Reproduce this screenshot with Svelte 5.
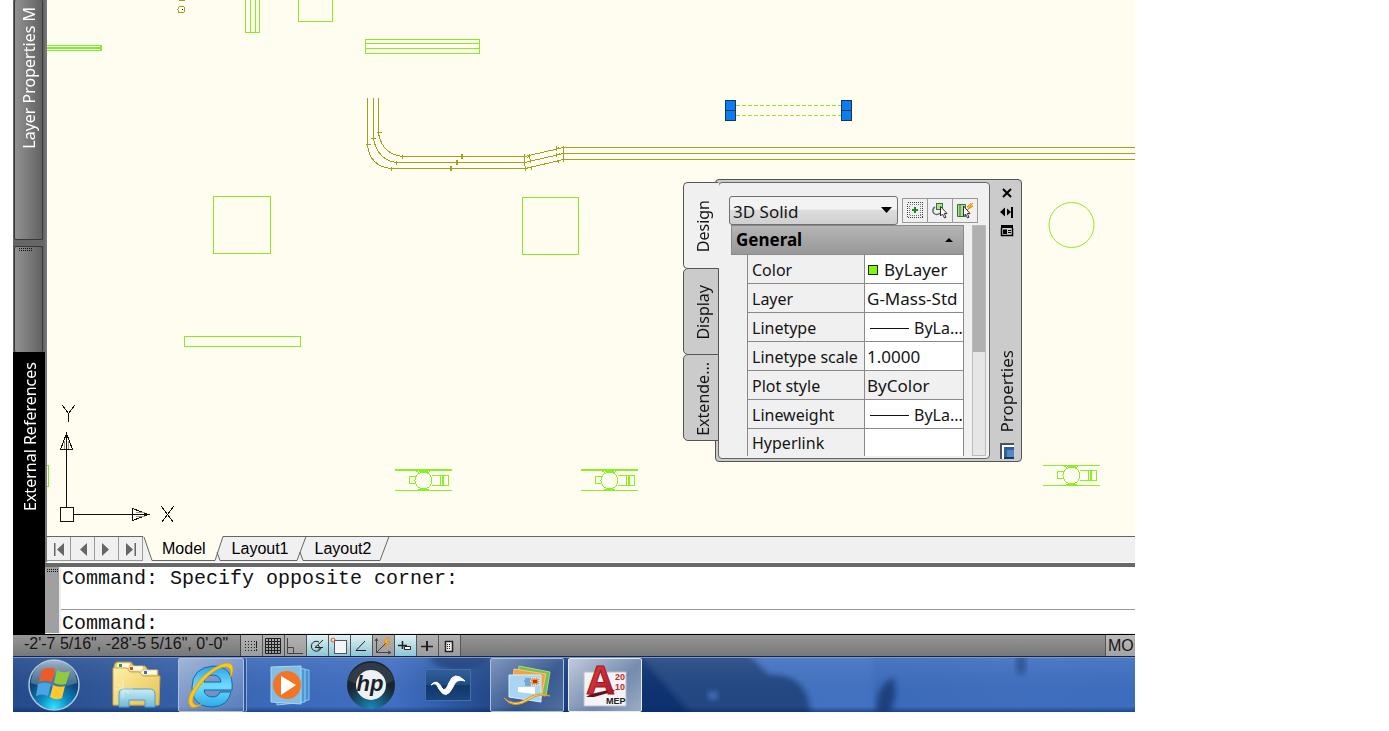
<script>
  const rows = [
    { name: 'Color', value: 'ByLayer', kind: 'color' },
    { name: 'Layer', value: 'G-Mass-Std', kind: 'text' },
    { name: 'Linetype', value: 'ByLa...', kind: 'line' },
    { name: 'Linetype scale', value: '1.0000', kind: 'input' },
    { name: 'Plot style', value: 'ByColor', kind: 'locked' },
    { name: 'Lineweight', value: 'ByLa...', kind: 'line' },
    { name: 'Hyperlink', value: '', kind: 'input' }
  ];
  const paletteTabs = ['Design', 'Display', 'Extende...'];
  let activeTab = $state('Design');
  let sheet = $state('Model');
  const toggles = [
    { id: 'snap', label: 'Snap', on: false },
    { id: 'grid', label: 'Grid', on: false },
    { id: 'ortho', label: 'Ortho', on: false },
    { id: 'polar', label: 'Polar', on: true },
    { id: 'osnap', label: 'Object snap', on: true },
    { id: 'otrack', label: 'Tracking', on: true },
    { id: 'ducs', label: 'Dynamic UCS', on: false },
    { id: 'dyn', label: 'Dynamic input', on: true },
    { id: 'lwt', label: 'Lineweight display', on: false },
    { id: 'qp', label: 'Quick properties', on: false }
  ];
  const fixtures = [
    { x: 394, y: 470, thick: true },
    { x: 580, y: 470, thick: true },
    { x: 1042, y: 465, thick: false }
  ];
</script>

<div class="page">
  <div class="workspace">
    <aside class="rail">
      <button class="dock first"><span>Layer Properties M</span></button>
      <button class="dock second" aria-label="Docked palette"><i class="dots"></i></button>
      <button class="xref"><span>External References</span></button>
    </aside>

    <main>
      <div class="canvas">
        <svg class="drawing" aria-hidden="true">
          <g transform="translate(-46.5 .5)" fill="none" shape-rendering="crispEdges">
            <g stroke="#88ec24">
              <path d="M245 -2V32H259V-2M250 -2V32M255 -2V32M298 -2V21H332V-2" />
              <path d="M40 45H101V50H40M40 47H101M40 48H101M100 45V50" stroke="#7cf02a" />
              <path d="M365 39H479V53H365ZM365 43H479M365 48H479" />
              <path d="M213 196H270V253H213ZM522 197H578V254H522ZM184 336H300V346H184ZM40 465H48V486H40" />
              <circle cx="1071" cy="224.500" r="22.500" shape-rendering="auto" />
            </g>
            <g stroke="#a0a020">
              <path d="M178 0H184" />
              <circle cx="181" cy="9" r="3.500" />
              <path d="M367 97V144Q369 166 391 168H525L563 159H4000M373 97V139Q378 160 396 162H524L563 153H4000M378 97V133Q382 154 402 156H524L563 147H4000" />
              <path d="M365 144H370M370 138H375M376 132H381M391 166V170M396 160V164M402 154V158M451 165V170M450 165V170M457 159V164M456 159V164M461 153V158M462 153V158M524 153V165M525 165V170M529 153V158M530 158V162M531 165V169M527 157L531 154M556 145V150M556 152V156M558 159V162M563 145V161M554 149L559 147M554 155L560 153M555 161L560 160" />
            </g>
            <path d="M181 9H182" stroke="#000" />
            {#each fixtures as f}
              <g transform="translate({f.x} {f.y})" stroke="#88f024">
                <path d="M0 0H57M0 20H57" />
                {#if f.thick}<path d="M0 -1H57" />{/if}
                <path d="M15 6H21V13H15ZM37 5H54V15H37M46 5V15M48 5V15M49 5V15" />
                <circle cx="29" cy="10" r="8.500" fill="#fffdf0" />
                <path d="M24 0H34L32 1H26ZM24 20H34L32 18H26ZM22 1L25 2M36 1L33 2M22 20L25 19M36 20L33 19" fill="#88f024" />
              </g>
            {/each}
            <path d="M735 105H841M735 115H841" stroke="#93e63a" stroke-dasharray="4 2" />
            <path d="M725 100H735V120H725ZM725 110H735M841 100H851V120H841ZM841 110H851" fill="#0a7df2" stroke="#1b3552" />
            <g stroke="#111">
              <path d="M60 507H73V521H60ZM66 507V433M73 514H148" />
              <path d="M66 433L60 449H72ZM148 514L132 508V520Z" />
              <path d="M64 440V448M68 440V448M135 512H144M135 516H144" stroke="#999" />
              <path d="M62 405L68 413L74 405M68 413V421M161 506L173 522M173 506L161 522" />
            </g>
          </g>
        </svg>

        <section class="palette">
          <nav class="side-tabs">
            {#each paletteTabs as tab}
              <button class:active={tab === activeTab} onclick={() => (activeTab = tab)}><span>{tab}</span></button>
            {/each}
          </nav>
          <div class="frame">
            <div class="panel">
              <div class="picker">
                <div class="combo">
                  <select aria-label="Object type"><option>3D Solid</option></select>
                  <svg width="11" height="6" viewBox="0 0 11 6" aria-hidden="true"><path d="M0 0H11L5.500 6Z" /></svg>
                </div>
                <div class="tools">
                  <button aria-label="Toggle PICKADD">
                    <svg width="18" height="18" viewBox="0 0 18 18" shape-rendering="crispEdges"><rect x="1.500" y="1.500" width="15" height="15" fill="none" stroke="#444" stroke-dasharray="1 1" /><rect x="3.500" y="3.500" width="11" height="11" fill="none" stroke="#777" stroke-dasharray="1 1" /><path d="M9 6V12M6 9H12" stroke="#109010" stroke-width="2" /></svg>
                  </button>
                  <button aria-label="Select objects">
                    <svg width="18" height="18" viewBox="0 0 18 18"><path d="M4 6A4 4 0 1 0 9 12" fill="none" stroke="#667" stroke-width="1.500" /><rect x="5.500" y="2.500" width="6" height="6" fill="#b8d8a0" stroke="#2c7a20" /><path d="M9.500 5.500V15L11.500 13L13.500 17L15 16.200L13.300 12.500H16Z" fill="#fff" stroke="#333" /></svg>
                  </button>
                  <button aria-label="Quick select">
                    <svg width="18" height="18" viewBox="0 0 18 18"><path d="M1.500 3.500H9.500V15.500H1.500ZM4 3.500V15.500" fill="#b8d8a0" stroke="#2c7a20" /><path d="M15 2L11 6H14L11 9L17 5H14L17 2" fill="#ffd060" stroke="#e88a10" /><path d="M7.500 5V15L9.500 13L11.500 17L13 16.200L11.300 12.500H14Z" fill="#fff" stroke="#333" /></svg>
                  </button>
                </div>
              </div>
              <div class="grid-area">
                <div class="properties">
                  <button class="group">General<svg width="8" height="4" viewBox="0 0 8 4" aria-hidden="true"><path d="M0 4H8L4 0Z" /></svg></button>
                  <table>
                    <tbody>
                      {#each rows as row}
                        <tr>
                          <th scope="row">{row.name}</th>
                          <td class={row.kind}>
                            {#if row.kind === 'input'}
                              <input aria-label={row.name} value={row.value} />
                            {:else if row.kind === 'color'}
                              <i class="swatch"></i>{row.value}
                            {:else if row.kind === 'line'}
                              <i class="stroke"></i>{row.value}
                            {:else}{row.value}{/if}
                          </td>
                        </tr>
                      {/each}
                    </tbody>
                  </table>
                </div>
                <div class="scroll"><i></i></div>
              </div>
            </div>
            <div class="caption">
              <button aria-label="Close"><svg width="14" height="12" viewBox="0 0 14 12"><path d="M3 2L11 10M11 2L3 10" stroke="#000" stroke-width="2" /></svg></button>
              <button aria-label="Auto-hide"><svg width="14" height="12" viewBox="0 0 14 12"><path d="M0 6L5 1.500V10.500ZM7 2.500L11 6L7 9.500ZM11 1H13V12H11Z" /></svg></button>
              <button aria-label="Menu"><svg width="14" height="12" viewBox="0 0 14 12"><path d="M1 0H13V3H1Z" /><path d="M1.500 3V10.500H12.500V3" fill="none" stroke="#000" stroke-width="1.500" /><path d="M3 4.500H7V9H3ZM8 5H11V6H8ZM8 7H11V8H8Z" /></svg></button>
              <h2>Properties</h2>
              <svg width="14" height="16" viewBox="0 0 14 16" aria-hidden="true"><path d="M0 0H14V2H2V16H0Z" fill="#4a5260" /><path d="M2 2H14V4H4V16H2Z" fill="#fff" /><path d="M4 4H14V16H4Z" fill="#2f5f9c" /><path d="M7 7H14V14H7Z" fill="#5288c4" /><path d="M4 14H14V16H4Z" fill="#163a68" /></svg>
            </div>
          </div>
        </section>
      </div>

      <div class="sheets">
        <svg class="sheet-lines" width="360" height="27" viewBox="0 0 360 27" aria-hidden="true">
          <path d="M96 0H176L168 24H105Z" fill="#fffdf0" />
          <path d="M97 1L105 24.500H168L176 .500M170 16L173 24.500H250L259 .500M253 16L256 24.500H333L342 .500" fill="none" stroke="#666" />
        </svg>
        <div class="steps">
          <button aria-label="First sheet"><svg width="12" height="14" viewBox="0 0 12 14"><path d="M1 1H2.500V14H1ZM11 1V14L4 7.500Z" /></svg></button>
          <button aria-label="Previous sheet"><svg width="12" height="14" viewBox="0 0 12 14"><path d="M10 1V14L3 7.500Z" /></svg></button>
          <button aria-label="Next sheet"><svg width="12" height="14" viewBox="0 0 12 14"><path d="M1 1V14L8 7.500Z" /></svg></button>
          <button aria-label="Last sheet"><svg width="12" height="14" viewBox="0 0 12 14"><path d="M1 1V14L8 7.500ZM9.500 1H11V14H9.500Z" /></svg></button>
        </div>
        {#each ['Model', 'Layout1', 'Layout2'] as name}
          <button class="sheet" aria-pressed={name === sheet} onclick={() => (sheet = name)}>{name}</button>
        {/each}
      </div>

      <div class="command">
        <div class="grip"><i class="dots"></i></div>
        <div class="console">
          <output>Command: Specify opposite corner:</output>
          <label><span>Command:</span><input aria-label="Command line" /></label>
        </div>
      </div>
    </main>
  </div>

  <footer class="status">
    <span class="coords">-2'-7 5/16", -28'-5 5/16", 0'-0"</span>
    <div class="toggles">
      {#each toggles as t}
        <button class:on={t.on} aria-label={t.label} aria-pressed={t.on}>
          <svg width="20" height="20" viewBox="0 0 20 20" fill="none" stroke="#222">
            {#if t.id === 'snap'}
              <path d="M4 5.500H14M4 8.500H14M4 11.500H14M4 14.500H14" stroke-dasharray="1 2" /><path d="M15.500 5V15" stroke-dasharray="7 1 2" />
            {:else if t.id === 'grid'}
              <path d="M2.500 2.500H17.500V17.500H2.500ZM5.500 2.500V17.500M8.500 2.500V17.500M11.500 2.500V17.500M14.500 2.500V17.500M2.500 5.500H17.500M2.500 8.500H17.500M2.500 11.500H17.500M2.500 14.500H17.500" />
            {:else if t.id === 'ortho'}
              <path d="M2.500 2V17.500H18M2.500 11.500H8.500V17.500" stroke="#444" />
            {:else if t.id === 'polar'}
              <path d="M12 6A5 5 0 1 0 14 12M16 4L8 11.500H16M11 9Q13 10 12 14" />
            {:else if t.id === 'osnap'}
              <rect x="5.500" y="4.500" width="12" height="13" fill="#f3f5f6" stroke="#555" /><circle cx="4" cy="4" r="2" stroke="#e05a30" />
            {:else if t.id === 'otrack'}
              <path d="M14 5L5 14.500H15" />
            {:else if t.id === 'ducs'}
              <path d="M3.500 3V16.500H18M3.500 16.500L13 7M2 5L3.500 2.500L5 5M15 15L18 16.500L15 18" stroke="#444" /><path d="M14 2L11 7H14L11 11L17 6H14L16 2Z" fill="#ffc840" stroke="#e68a10" />
            {:else if t.id === 'dyn'}
              <path d="M7.500 5V13M3 9.500H12" stroke-width="1.500" /><path d="M9.500 10.500H15.500V13.500H9.500Z" fill="#fff" />
            {:else if t.id === 'lwt'}
              <path d="M4 10.500H16" stroke-width="1.500" /><path d="M10 5V15" stroke-width="2" />
            {:else}
              <rect x="6.500" y="5.500" width="7" height="10" fill="#eee" stroke-width="1.500" /><path d="M8 8.500H12M8 10.500H12M8 12.500H12" stroke-dasharray="1 1" />
            {/if}
          </svg>
        </button>
      {/each}
    </div>
    <button class="space">MODEL</button>
  </footer>

  <div class="taskbar">
    <svg class="wallpaper" preserveAspectRatio="none" viewBox="0 0 1122 56" aria-hidden="true">
      <defs>
        <linearGradient id="sky"><stop offset="0" stop-color="#254b8c" /><stop offset=".09" stop-color="#305798" /><stop offset=".22" stop-color="#3b69b9" /><stop offset=".34" stop-color="#416fc2" /><stop offset=".38" stop-color="#315eac" /><stop offset=".42" stop-color="#244a8c" /><stop offset=".57" stop-color="#0d3472" /><stop offset=".63" stop-color="#214985" /><stop offset=".65" stop-color="#4272c2" /><stop offset=".77" stop-color="#3968b7" /><stop offset=".9" stop-color="#426fc0" /><stop offset="1" stop-color="#3b6cc0" /></linearGradient>
        <linearGradient id="shade" x2="0" y2="1"><stop offset="0" stop-color="#fff" stop-opacity=".08" /><stop offset=".9" stop-color="#123" stop-opacity="0" /><stop offset="1" stop-color="#002a78" stop-opacity=".55" /></linearGradient>
        <filter id="soft" x="-20%" y="-20%" width="140%" height="140%"><feGaussianBlur stdDeviation="3" /></filter>
      </defs>
      <rect width="1122" height="56" fill="url(#sky)" />
      <path d="M735 -5H1130V60H735Z" fill="#3e6dbe" opacity=".5" />
      <g filter="url(#soft)">
        <path d="M733 -5L753 20Q795 18 798 60H860V-5Z" fill="#4372c1" />
        <path d="M625 -5H735L756 17Q797 15 798 60H625Z" fill="#204682" />
        <path d="M625 -5L680 60H625Z" fill="#0e3370" />
      </g>
      <circle cx="700" cy="39" r="5" fill="#4470b8" filter="url(#soft)" />
      <path d="M880 20Q886 36 877 56H864Q862 30 880 20Z" fill="#1b417e" filter="url(#soft)" />
      <ellipse cx="1008" cy="4" rx="5" ry="14" fill="#244b8c" filter="url(#soft)" />
      <ellipse cx="446" cy="0" rx="28" ry="12" fill="#1b3f7e" filter="url(#soft)" />
      <rect width="1122" height="56" fill="url(#shade)" />
    </svg>

    <button class="start" aria-label="Start">
      <svg width="54" height="54" viewBox="0 0 54 54">
        <defs>
          <radialGradient id="orb" cx=".5" cy=".95" r=".8"><stop offset="0" stop-color="#2ee6ff" /><stop offset=".35" stop-color="#0c8fc4" /><stop offset=".75" stop-color="#0c4777" /><stop offset="1" stop-color="#123a63" /></radialGradient>
          <linearGradient id="gloss" x2="0" y2="1"><stop offset="0" stop-color="#c6d4e0" stop-opacity=".8" /><stop offset="1" stop-color="#5d7f9d" stop-opacity=".6" /></linearGradient>
        </defs>
        <circle cx="27" cy="27" r="25" fill="url(#orb)" stroke="#a9c6de" stroke-width="1.500" />
        <path d="M4 25A23 23 0 0 1 50 25Q27 33 4 25Z" fill="url(#gloss)" />
        <path d="M15 12Q21 8 28 11L25 24Q19 21 12 24Z" fill="#ee5a28" />
        <path d="M30 12Q36 16 43 13L39 26Q33 28 27 25Z" fill="#92c83e" />
        <path d="M11 26Q17 23 24 26L21 38Q15 35 9 38Z" fill="#4aa3e6" />
        <path d="M26 27Q32 30 38 28L35 40Q29 43 23 39Z" fill="#ffc62e" />
      </svg>
    </button>
    <button class="app explorer" aria-label="Explorer">
      <svg width="50" height="48" viewBox="0 0 50 48">
        <defs><linearGradient id="folder" x2="1" y2="1"><stop offset="0" stop-color="#fff0a8" /><stop offset="1" stop-color="#e6bf4f" /></linearGradient><linearGradient id="stand" x2="0" y2="1"><stop offset="0" stop-color="#c9edf6" /><stop offset="1" stop-color="#6fb9da" /></linearGradient></defs>
        <path d="M3 6Q3 2 6 1H20L23 5H34L37 9H47V44H3Z" fill="#e8cf7a" stroke="#b9984a" />
        <path d="M6 2H19V7H6ZM18 5H32V10H18ZM30 9H46V14H30Z" fill="#fffbe8" stroke="#d6bb66" stroke-width=".5" />
        <path d="M8 3H11V6H8Z" fill="#2a9a52" /><path d="M19 6H22V9H19Z" fill="#d64528" /><path d="M33 10H36V13H33Z" fill="#2878b8" />
        <path d="M2 7H16L19 11H28L32 15H49L48 44H2Z" fill="url(#folder)" stroke="#cfa947" />
        <path d="M8 46V33Q8 28 13 28H38Q44 28 44 33V46H34V39H18V46Z" fill="url(#stand)" stroke="#4e9fc6" />
        <path d="M12 18V37M3 28H22M6 22L18 33" stroke="#fff" opacity=".45" />
      </svg>
    </button>
    <button class="app running stacked" aria-label="Internet Explorer">
      <svg width="50" height="50" viewBox="0 0 50 50">
        <defs><linearGradient id="ie" x2="0" y2="1"><stop offset="0" stop-color="#2fa4e6" /><stop offset=".5" stop-color="#6fdcff" /><stop offset="1" stop-color="#2aa9e8" /></linearGradient></defs>
        <path d="M45 32H34Q32 37 27 37Q19 37 18 30H46Q48 6 27 6Q6 8 6 27Q6 47 27 47Q42 46 45 32ZM18 22Q20 15 27 15Q34 15 35 22Z" fill="url(#ie)" stroke="#1468aa" stroke-width="1" />
        <path d="M5 47Q-1 42 7 29Q18 11 36 4Q48 0 47 11Q47 14 44 18Q46 8 41 7Q30 6 15 24Q2 41 9 45Q12 46 17 43Q10 49 5 47Z" fill="#f9c81e" stroke="#cf9311" stroke-width=".6" />
      </svg>
    </button>
    <button class="app media" aria-label="Media player">
      <svg width="42" height="42" viewBox="0 0 42 42">
        <path d="M12 4L40 6V36L12 40Z" fill="#4694cf" stroke="#85c6eb" /><path d="M8 3L36 5V38L8 41Z" fill="#4c9ad3" stroke="#93cff0" /><path d="M2 3L32 2V40L2 38Z" fill="#84bde3" stroke="#a5d9f2" />
        <circle cx="18" cy="21" r="14" fill="#f27525" /><path d="M12 12L27 21L12 31Z" fill="#fff" />
      </svg>
    </button>
    <button class="app hp" aria-label="HP">
      <svg width="50" height="50" viewBox="0 0 50 50">
        <defs><radialGradient id="hpg" cy="1" r=".6"><stop offset="0" stop-color="#168bbd" /><stop offset="1" stop-color="#192631" /></radialGradient></defs>
        <circle cx="25" cy="25" r="24" fill="url(#hpg)" /><path d="M2 20A24 24 0 0 1 48 20Q25 34 2 20Z" fill="#59636d" opacity=".35" />
        <circle cx="25" cy="25" r="15" fill="#eef1f3" />
        <text x="24" y="31" text-anchor="middle" font-family="Liberation Sans, sans-serif" font-size="22" font-style="italic" font-weight="700" fill="#18222b">hp</text>
      </svg>
    </button>
    <button class="app check" aria-label="Sync">
      <svg width="46" height="32" viewBox="0 0 46 32">
        <defs><linearGradient id="navy" x2="0" y2="1"><stop offset="0" stop-color="#315f9c" /><stop offset=".5" stop-color="#204a82" /><stop offset=".52" stop-color="#12376b" /><stop offset="1" stop-color="#1a457e" /></linearGradient></defs>
        <rect x=".5" y=".5" width="45" height="31" fill="url(#navy)" stroke="#476fa6" />
        <path d="M6 16Q12 9 17 19Q20 24 24 14Q29 1 40 12Q31 9 28 18Q21 32 14 20Q11 12 6 16Z" fill="#fff" stroke="#fff" />
      </svg>
    </button>
    <button class="app running mail" aria-label="Mail">
      <svg width="48" height="42" viewBox="0 0 48 42">
        <path d="M16 2L47 8L43 32L12 28Z" fill="#76bf55" stroke="#a2dc7c" /><path d="M11 5L43 10L38 34L8 30Z" fill="#efa34c" stroke="#ffc678" />
        <path d="M6 11H38V38L6 33Z" fill="#a8d5f3" stroke="#d9f0ff" /><path d="M28 14H36V21H28Z" fill="#e99346" stroke="#fff" stroke-dasharray="1 1" /><path d="M30 16H34V19H30Z" fill="#ad3c1e" /><path d="M22 15H28M21 17H27M22 19H28M22 21H28" stroke="#4a789f" /><path d="M15 23H32V30L15 28Z" fill="#fff" />
        <path d="M1 34Q10 42 22 36Q36 26 47 32Q35 29 26 36Q10 46 1 34Z" fill="#ffdb65" stroke="#d99b26" />
      </svg>
    </button>
    <button class="app running active cad" aria-label="MEP">
      <svg width="46" height="50" viewBox="0 0 46 50">
        <defs><linearGradient id="ruby" x2="1" y2="1"><stop offset="0" stop-color="#e9444c" /><stop offset="1" stop-color="#a3141e" /></linearGradient></defs>
        <path d="M2 12H44V46H2Z" fill="#f4f4f5" stroke="#b9bec6" />
        <path d="M4 37L9 34L18 32L30 29L33 31L26 33L12 37Z" fill="#66101a" />
        <g font-family="Liberation Sans, sans-serif" font-weight="700">
          <text x="4" y="34" font-size="40" fill="url(#ruby)" stroke="#a3141e">A</text>
          <g font-size="9" fill="#c3292c"><text x="33" y="20">20</text><text x="33" y="30">10</text></g>
          <text x="24" y="44" font-size="9" fill="#222">MEP</text>
        </g>
      </svg>
    </button>
  </div>
</div>

<style>
  :global(body) { margin: 0; background: #fff; }
  * { box-sizing: border-box; }
  button, input, select { margin: 0; padding: 0; border: 0; border-radius: 0; background: none; color: inherit; font: inherit; outline: none; }
  svg { display: block; flex: none; }
  .page { display: flex; flex-direction: column; min-height: 100vh; padding: 0 254px 19px 13px; font: 16px/20px "Noto Sans", "Open Sans", sans-serif; color: #151515; }
  .workspace { display: flex; flex: 1; }
  .rail { display: flex; flex-direction: column; width: 32px; background: #666; flex: none; }
  .dock { width: 29px; margin-left: 1px; border: 1px solid #383838; border-radius: 2px; background: linear-gradient(90deg, #929292, #626262); display: flex; justify-content: center; }
  .dock.first { height: 240px; border-top: 0; align-items: flex-end; padding-bottom: 90px; overflow: hidden; color: #fff; }
  .dock.second { height: 106px; margin-top: 6px; border-bottom: 0; align-items: flex-start; justify-content: flex-start; padding: 1px 3px; }
  .dots { width: 14px; height: 4px; background: conic-gradient(#111 25%, transparent 0) 0 0 / 2px 2px; }
  .rail span, .side-tabs span, .caption h2 { writing-mode: vertical-rl; transform: rotate(180deg); white-space: nowrap; }
  .xref { flex: 1; background: #000; color: #fff; display: flex; justify-content: center; align-items: flex-start; padding: 10px 0 0 2px; }
  main { flex: 1; min-width: 0; display: flex; flex-direction: column; }
  .canvas { position: relative; flex: 1; min-height: 480px; overflow: hidden; background: #fffdf0; border-left: 2px solid #777; }
  .drawing { position: absolute; inset: 0; width: 100%; height: 100%; }
  .palette { position: absolute; left: 636px; top: 179px; display: flex; align-items: flex-start; }
  .side-tabs { display: flex; flex-direction: column; width: 36px; margin: 3px -4px 0 0; z-index: 1; }
  .side-tabs button { height: 87px; margin-bottom: -1px; padding: 0 0 4px 3px; border: 1px solid #555; border-radius: 5px 0 0 5px; background: #cbcbcb; display: flex; align-items: flex-end; justify-content: center; }
  .side-tabs button.active { border-right-color: #f0f0f0; background: #f0f0f0; padding-bottom: 16px; }
  .side-tabs button:nth-child(2) { padding-bottom: 14px; }
  .frame { display: flex; border: 1px solid #555; border-radius: 4px; background: #cbcbcb; padding: 2px 0 2px 2px; }
  .panel { border: 1px solid #666; border-radius: 4px; background: #f0f0f0; padding: 12px 3px 2px 10px; }
  .picker { display: flex; align-items: center; gap: 4px; height: 30px; }
  .combo { position: relative; width: 169px; height: 29px; }
  .combo select { appearance: none; width: 100%; height: 100%; padding: 3px 3px 0; border: 1px solid #707070; border-radius: 3px; background: linear-gradient(#f3f3f3 45%, #dcdcdc 50%, #d0d0d0); font-size: 17px; }
  .combo svg { position: absolute; right: 6px; top: 11px; }
  .tools { display: flex; width: 76px; height: 25px; border: 1px solid #999; }
  .tools button { flex: 1; display: flex; align-items: center; justify-content: center; }
  .tools button + button { border-left: 1px solid #999; }
  .grid-area { display: flex; gap: 8px; padding-left: 2px; }
  .properties { width: 233px; }
  .group { display: flex; align-items: center; justify-content: space-between; width: 100%; height: 30px; padding: 0 10px 0 4px; border: 1px solid #8a8a8a; background: linear-gradient(#b5b5b5, #989898); color: #000; font-size: 17px; font-weight: 700; }
  table { width: 217px; margin-left: 16px; border-collapse: separate; border-spacing: 0; table-layout: fixed; }
  th, td { height: 29px; padding: 1px 0 0; border-left: 1px solid #8a8a8a; border-bottom: 1px solid #8a8a8a; text-align: left; font-weight: 400; white-space: nowrap; overflow: hidden; vertical-align: middle; }
  th { width: 117px; padding-left: 4px; background: #f0f0f0; }
  td { padding-left: 2px; border-right: 1px solid #8a8a8a; background: #fff; font-size: 17px; }
  td.line { font-size: 16px; }
  tr:last-child th, tr:last-child td { height: 27px; border-bottom: 0; }
  td.locked { background: #f0f0f0; }
  td input { display: block; width: 100%; height: 22px; }
  .swatch { display: inline-block; width: 10px; height: 10px; margin: 0 6px 1px 1px; border: 1px solid #222; background: #80f808; }
  .stroke { display: inline-block; width: 39px; height: 1px; margin: 0 5px 5px 3px; background: #111; }
  .scroll { width: 14px; border: 1px solid #bbb; background: #e6e6e6; }
  .scroll i { display: block; height: 126px; background: #b0b0b0; }
  .caption { width: 31px; display: flex; flex-direction: column; align-items: center; padding-left: 2px; }
  .caption button { height: 19px; flex: none; }
  .caption button svg { margin-top: 2px; }
  .caption h2 { margin: auto 0 10px; font-size: 17px; font-weight: 400; }
  .sheets { position: relative; display: flex; height: 27px; border-top: 1px solid #666; border-left: 2px solid #777; border-bottom: 1px solid #fff; background: #f0f0f0; font: 16px/24px "Liberation Sans", Arial, sans-serif; color: #000; }
  .sheet-lines { position: absolute; left: 0; top: -1px; }
  .steps { position: relative; display: flex; height: 24px; width: 96px; margin-right: 19px; }
  .steps button { flex: 1; border-right: 1px solid #999; border-bottom: 1px solid #999; display: flex; align-items: center; justify-content: center; fill: #666; }
  .sheet { position: relative; height: 24px; margin-right: 26px; }
  .command { display: flex; height: 71px; border-top: 4px solid #686868; border-bottom: 1px solid #eee; }
  .grip { width: 16px; padding: 2px 1px; background: #a0a0a0; border-right: 2px solid #eee; }
  .grip .dots { display: block; width: 12px; }
  .console { flex: 1; display: flex; flex-direction: column; background: #fff; font: 20px/24px "Liberation Mono", "Courier New", monospace; color: #111; }
  .console output { flex: 1; padding-left: 1px; border-bottom: 1px solid #999; white-space: nowrap; }
  .console label { display: flex; height: 23px; padding-left: 1px; line-height: 27px; }
  .console input { flex: 1; min-width: 0; }
  .status { display: flex; height: 23px; border-top: 1px solid #000; border-bottom: 1px solid #14264a; background: linear-gradient(#969696, #777); font: 16px/18px "Liberation Sans", Arial, sans-serif; overflow: hidden; }
  .coords { width: 227px; padding-left: 11px; white-space: nowrap; flex: none; }
  .toggles { display: flex; border-left: 1px solid #444; }
  .toggles button { width: 22px; border-right: 1px solid #555; background: linear-gradient(#b3b3b3, #9c9c9c); }
  .toggles button.on { background: linear-gradient(#e2f1f3, #8cc6d4); }
  .space { width: 30px; margin-left: auto; padding-left: 2px; border-left: 1px solid #555; background: linear-gradient(#bbb, #a3a3a3); overflow: hidden; text-align: left; }
  .taskbar { position: relative; display: flex; gap: 4px; height: 55px; border-top: 1px solid #7798cb; overflow: hidden; }
  .wallpaper { position: absolute; inset: 0; width: 100%; height: 100%; }
  .taskbar button { position: relative; display: flex; align-items: center; justify-content: center; height: 54px; flex: none; }
  .start { width: 81px; }
  .explorer, .check { width: 76px; }
  .media { width: 84px; }
  .hp { width: 70px; }
  .mail, .cad { width: 74px; }
  .taskbar .running { border: 1px solid #a8bfe0; border-radius: 2px; background: linear-gradient(135deg, rgba(255, 255, 255, .38), rgba(255, 255, 255, .1) 60%, rgba(255, 255, 255, .25)); }
  .taskbar .active { border-color: #e4ecf6; background: linear-gradient(135deg, rgba(255, 255, 255, .7), rgba(255, 255, 255, .4) 60%, rgba(255, 255, 255, .6)); }
  .taskbar .stacked { width: 66px; background: linear-gradient(135deg, rgba(255, 255, 255, .5), rgba(255, 255, 255, .15)); box-shadow: 2px 0 0 #2c5599, 3px 0 0 #8eabd8; }
</style>
